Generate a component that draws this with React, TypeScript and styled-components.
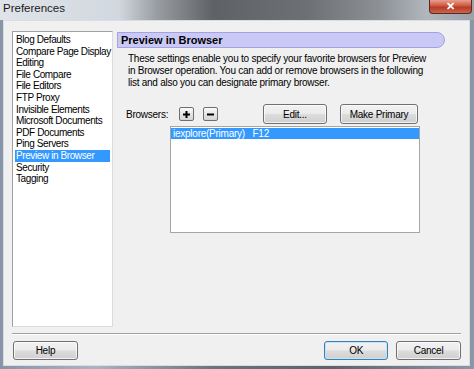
import styled, { createGlobalStyle } from 'styled-components';

const GlobalStyle = createGlobalStyle`
  html, body {
    margin: 0;
    padding: 0;
    background: #6f7c8c;
  }
  * {
    box-sizing: border-box;
  }
`;

const Window = styled.div`
  width: 474px;
  height: 369px;
  display: flex;
  flex-direction: column;
  background: linear-gradient(90deg, #8795a8 0%, #a9b4c2 20%, #6c737c 45%, #5d636b 70%, #8b97a6 100%);
  font-family: 'Liberation Sans', Arial, sans-serif;
  font-size: 10px;
  letter-spacing: -0.25px;
  color: #000;
  overflow: hidden;
`;

const TitleBar = styled.div`
  height: 20px;
  display: flex;
  align-items: flex-start;
  padding-left: 3px;
  background: linear-gradient(90deg, #dfe4ea 0%, #d2d8df 25%, #9a9ea3 33%, #5e6166 45%, #6d7075 65%, #8d9196 80%, #b2b7bd 90%, #9aa1a9 100%);
`;

const Title = styled.span`
  margin-top: 2px;
  font-size: 11.5px;
  letter-spacing: 0;
  color: #1a1a1a;
`;

const CloseButton = styled.div`
  margin-left: auto;
  margin-right: 2px;
  width: 43px;
  height: 14px;
  border: 1px solid #5a2a22;
  border-top: none;
  border-radius: 0 0 4px 4px;
  background: linear-gradient(180deg, #e6a08f 0%, #d0563f 45%, #b83a24 55%, #c8664e 100%);
  display: flex;
  align-items: center;
  justify-content: center;
  color: #fff;
  font-weight: bold;
  font-size: 11px;
  line-height: 1;
`;

const Client = styled.div`
  flex: 1;
  margin: 0 4px 3px 3px;
  background: #f0f0f0;
  border: 1px solid #d9dde2;
  display: flex;
  flex-direction: column;
  padding: 10px 8px 0 8px;
`;

const Main = styled.div`
  display: flex;
  gap: 4px;
`;

const CategoryList = styled.div`
  width: 101px;
  height: 296px;
  background: #fff;
  border: 1px solid #a0a0a0;
  border-right-color: #dcdcdc;
  border-bottom-color: #dcdcdc;
  padding: 2px 2px 0 2px;
  letter-spacing: -0.4px;
`;

const Category = styled.div<{ $selected?: boolean }>`
  height: 11.6px;
  line-height: 11.6px;
  padding-left: 1px;
  white-space: nowrap;
  background: ${(p) => (p.$selected ? '#3399ff' : 'transparent')};
  color: ${(p) => (p.$selected ? '#fff' : '#000')};
`;

const Panel = styled.div`
  flex: 1;
  display: flex;
  flex-direction: column;
  padding-top: 1px;
`;

const Header = styled.div`
  width: 328px;
  height: 16px;
  background: #cac9f6;
  border: 1px solid #a3a2e2;
  border-radius: 0 8px 8px 0;
  padding-left: 3px;
  font-weight: bold;
  font-size: 11px;
  letter-spacing: 0;
  line-height: 14px;
`;

const Description = styled.p`
  margin: 5px 0 0 11px;
  line-height: 12px;
  white-space: nowrap;
`;

const BrowserRow = styled.div`
  display: flex;
  align-items: center;
  margin-top: 15px;
  padding-left: 9px;
  height: 20px;
`;

const RowLabel = styled.span`
  width: 53px;
`;

const IconButton = styled.div`
  width: 15px;
  height: 14px;
  margin-right: 9px;
  border: 1px solid #6f6f6f;
  border-radius: 2px;
  background: linear-gradient(180deg, #fafafa 0%, #e6e6e6 50%, #d4d4d4 100%);
  display: flex;
  align-items: center;
  justify-content: center;
`;

const Button = styled.div<{ $width: number; $default?: boolean }>`
  width: ${(p) => p.$width}px;
  height: ${(p) => (p.$default !== undefined ? 19 : 20)}px;
  border: 1px solid ${(p) => (p.$default ? '#3c7fb1' : '#707070')};
  border-radius: 3px;
  background: linear-gradient(180deg, #f2f2f2 0%, #ebebeb 48%, #dddddd 52%, #cfcfcf 100%);
  box-shadow: inset 0 0 0 1px ${(p) => (p.$default ? '#bde6f8' : 'rgba(255,255,255,0.7)')};
  display: flex;
  align-items: center;
  justify-content: center;
  font-size: 10px;
`;

const Spacer = styled.div<{ $width: number }>`
  width: ${(p) => p.$width}px;
`;

const BrowserList = styled.div`
  margin: 2px 0 0 53px;
  width: 250px;
  height: 107px;
  background: #fff;
  border: 1px solid #a5a5a5;
  padding: 1px 0 0 0;
`;

const BrowserItem = styled.div`
  height: 11px;
  line-height: 11px;
  background: #3399ff;
  color: #fff;
  padding-left: 2px;
  white-space: pre;
`;

const Separator = styled.div`
  margin-top: 6px;
  height: 2px;
  border-top: 1px solid #a0a0a0;
  border-bottom: 1px solid #fff;
`;

const Footer = styled.div`
  display: flex;
  align-items: center;
  gap: 8px;
  margin-top: 6px;
  padding-left: 1px;
`;

const Plus = () => (
  <svg width="9" height="9" viewBox="0 0 9 9">
    <path d="M4.5 1v7M1 4.5h7" stroke="#000" strokeWidth="2" />
  </svg>
);

const Minus = () => (
  <svg width="9" height="9" viewBox="0 0 9 9">
    <path d="M1 4.5h7" stroke="#000" strokeWidth="2" />
  </svg>
);

const categories = [
  'Blog Defaults',
  'Compare Page Display',
  'Editing',
  'File Compare',
  'File Editors',
  'FTP Proxy',
  'Invisible Elements',
  'Microsoft Documents',
  'PDF Documents',
  'Ping Servers',
  'Preview in Browser',
  'Security',
  'Tagging',
];

export default function App() {
  return (
    <>
      <GlobalStyle />
      <Window>
        <TitleBar>
          <Title>Preferences</Title>
          <CloseButton>✕</CloseButton>
        </TitleBar>
        <Client>
          <Main>
            <CategoryList>
              {categories.map((c) => (
                <Category key={c} $selected={c === 'Preview in Browser'}>
                  {c}
                </Category>
              ))}
            </CategoryList>
            <Panel>
              <Header>Preview in Browser</Header>
              <Description>
                These settings enable you to specify your favorite browsers for Preview
                <br />
                in Browser operation. You can add or remove browsers in the following
                <br />
                list and also you can designate primary browser.
              </Description>
              <BrowserRow>
                <RowLabel>Browsers:</RowLabel>
                <IconButton>
                  <Plus />
                </IconButton>
                <IconButton>
                  <Minus />
                </IconButton>
                <Spacer $width={36} />
                <Button $width={64}>Edit...</Button>
                <Spacer $width={13} />
                <Button $width={78}>Make Primary</Button>
              </BrowserRow>
              <BrowserList>
                <BrowserItem>iexplore(Primary)   F12</BrowserItem>
              </BrowserList>
            </Panel>
          </Main>
          <Separator />
          <Footer>
            <Button $width={65} $default={false}>Help</Button>
            <Spacer $width={231} />
            <Button $width={64} $default>OK</Button>
            <Button $width={65} $default={false}>Cancel</Button>
          </Footer>
        </Client>
      </Window>
    </>
  );
}
